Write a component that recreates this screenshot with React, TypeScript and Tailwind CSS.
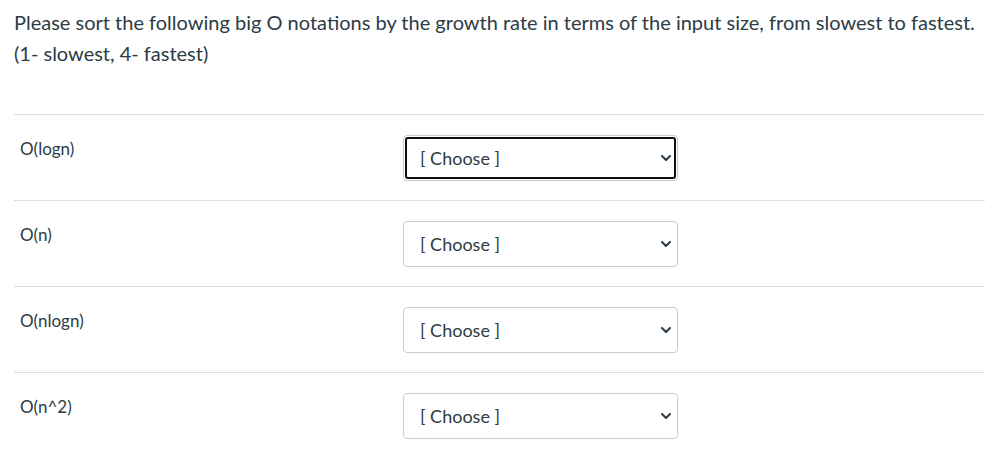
const rows = ["O(logn)", "O(n)", "O(nlogn)", "O(n^2)"];

function Chevron() {
  return (
    <svg
      viewBox="0 0 10 6"
      className="w-[10px] h-[6px] text-[#2d3b45]"
      fill="none"
      stroke="currentColor"
      strokeWidth="2"
      strokeLinecap="round"
      strokeLinejoin="round"
    >
      <path d="M1 1l4 4 4-4" />
    </svg>
  );
}

function Select({ focused }: { focused?: boolean }) {
  return (
    <div
      className={
        focused
          ? "w-[275px] h-[46px] rounded-[4px] border border-[#c7cdd1] p-px"
          : "w-[275px] h-[46px] rounded-[4px] border border-[#c7cdd1]"
      }
    >
      <div
        className={
          focused
            ? "h-full rounded-[3px] border-2 border-[#101010] flex items-center justify-between pl-[13px] pr-[3px]"
            : "h-full flex items-center justify-between pl-[16px] pr-[6px]"
        }
      >
        <span className="text-[18px] text-[#2d3b45]">[ Choose ]</span>
        <Chevron />
      </div>
    </div>
  );
}

export default function App() {
  return (
    <main
      className="w-full min-h-screen bg-white text-[#2d3b45] pl-[14px] pr-[2px]"
      style={{ fontFamily: "Lato, 'Noto Sans', sans-serif" }}
    >
      <p className="pt-[7px] text-[20px] leading-[31px]">
        Please sort the following big O notations by the growth rate in terms of the input size, from slowest to fastest. (1- slowest, 4- fastest)
      </p>
      <div className="mt-[45px]">
        {rows.map((label, i) => (
          <div
            key={label}
            className="grid grid-cols-[389px_1fr] border-t border-[#dcdfe2] pt-[20px] pb-[19px]"
          >
            <div className="pl-[6px] pt-[2px] text-[17px] leading-[24px]">{label}</div>
            <Select focused={i === 0} />
          </div>
        ))}
      </div>
    </main>
  );
}
